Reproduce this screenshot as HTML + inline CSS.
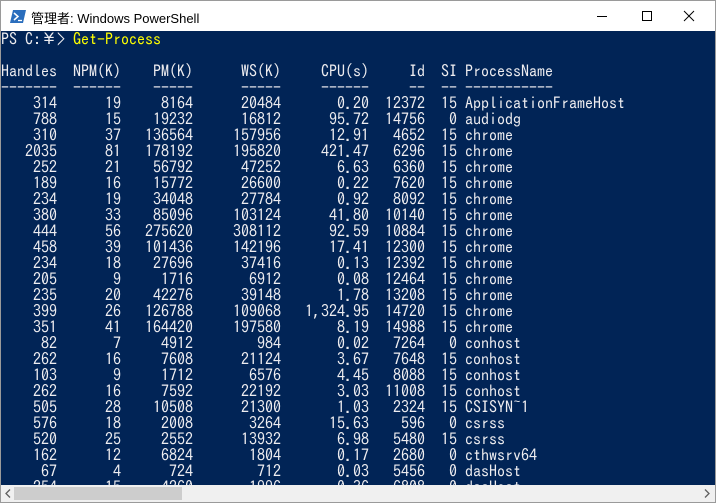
<!DOCTYPE html>
<html><head><meta charset="utf-8"><style>
html,body{margin:0;padding:0;width:716px;height:503px;overflow:hidden;background:#fff}
#win{position:absolute;left:0;top:0;width:714px;height:501px;border:1px solid #9a9a9a;background:#fff}
#title{position:absolute;left:0;top:0;width:714px;height:30px;background:#fff}
#title .t{position:absolute;left:30px;top:7px;font:13px "Liberation Sans","Noto Sans CJK JP",sans-serif;color:#000}
#con{position:absolute;left:0;top:30px;width:714px;height:454px;background:#012456;overflow:hidden}
pre{margin:0;font-family:"IPAGothic","Liberation Mono",monospace;font-size:16px;line-height:16px;color:#eeedf0;white-space:pre}
.y{color:#ffff00}
#sb{position:absolute;left:0;top:484px;width:714px;height:17px;background:#f0f0f0}
#thumb{position:absolute;left:13px;top:2px;width:168px;height:13px;background:#cdcdcd}
</style></head><body><div id="win">
<div id="title">
<svg style="position:absolute;left:9px;top:9px" width="16" height="13" viewBox="0 0 16 13"><polygon points="3,0 16,0 13,13 0,13" fill="#2a6ebd"/><polyline points="4,3 8,6.5 4,10" fill="none" stroke="#fff" stroke-width="1.5"/><line x1="8" y1="10.5" x2="12" y2="10.5" stroke="#fff" stroke-width="1.3"/></svg>
<div class="t">管理者: Windows PowerShell</div>
<svg style="position:absolute;left:596px;top:9px" width="110" height="12" viewBox="0 0 110 12"><line x1="0" y1="6.5" x2="10" y2="6.5" stroke="#000"/><rect x="45.5" y="1.5" width="9" height="9" fill="none" stroke="#000"/><line x1="87" y1="1" x2="97" y2="11" stroke="#000"/><line x1="97" y1="1" x2="87" y2="11" stroke="#000"/></svg>
</div>
<div id="con"><pre>PS C:¥&gt; <span class="y">Get-Process</span>

Handles  NPM(K)    PM(K)      WS(K)     CPU(s)     Id  SI ProcessName
-------  ------    -----      -----     ------     --  -- -----------
    314      19     8164      20484       0.20  12372  15 ApplicationFrameHost
    788      15    19232      16812      95.72  14756   0 audiodg
    310      37   136564     157956      12.91   4652  15 chrome
   2035      81   178192     195820     421.47   6296  15 chrome
    252      21    56792      47252       6.63   6360  15 chrome
    189      16    15772      26600       0.22   7620  15 chrome
    234      19    34048      27784       0.92   8092  15 chrome
    380      33    85096     103124      41.80  10140  15 chrome
    444      56   275620     308112      92.59  10884  15 chrome
    458      39   101436     142196      17.41  12300  15 chrome
    234      18    27696      37416       0.13  12392  15 chrome
    205       9     1716       6912       0.08  12464  15 chrome
    235      20    42276      39148       1.78  13208  15 chrome
    399      26   126788     109068   1,324.95  14720  15 chrome
    351      41   164420     197580       8.19  14988  15 chrome
     82       7     4912        984       0.02   7264   0 conhost
    262      16     7608      21124       3.67   7648  15 conhost
    103       9     1712       6576       4.45   8088  15 conhost
    262      16     7592      22192       3.03  11008  15 conhost
    505      28    10508      21300       1.03   2324  15 CSISYN~1
    576      18     2008       3264      15.63    596   0 csrss
    520      25     2552      13932       6.98   5480  15 csrss
    162      12     6824       1804       0.17   2680   0 cthwsrv64
     67       4      724        712       0.03   5456   0 dasHost
    254      15     4260       1996       0.36   6808   0 dasHost</pre></div>
<div id="sb"><div id="thumb"></div>
<svg style="position:absolute;left:4px;top:4px" width="6" height="9"><polyline points="5,0.5 1,4.5 5,8.5" fill="none" stroke="#606060" stroke-width="1.3"/></svg>
<svg style="position:absolute;left:703px;top:4px" width="6" height="9"><polyline points="1,0.5 5,4.5 1,8.5" fill="none" stroke="#606060" stroke-width="1.3"/></svg>
</div>
</div></body></html>
